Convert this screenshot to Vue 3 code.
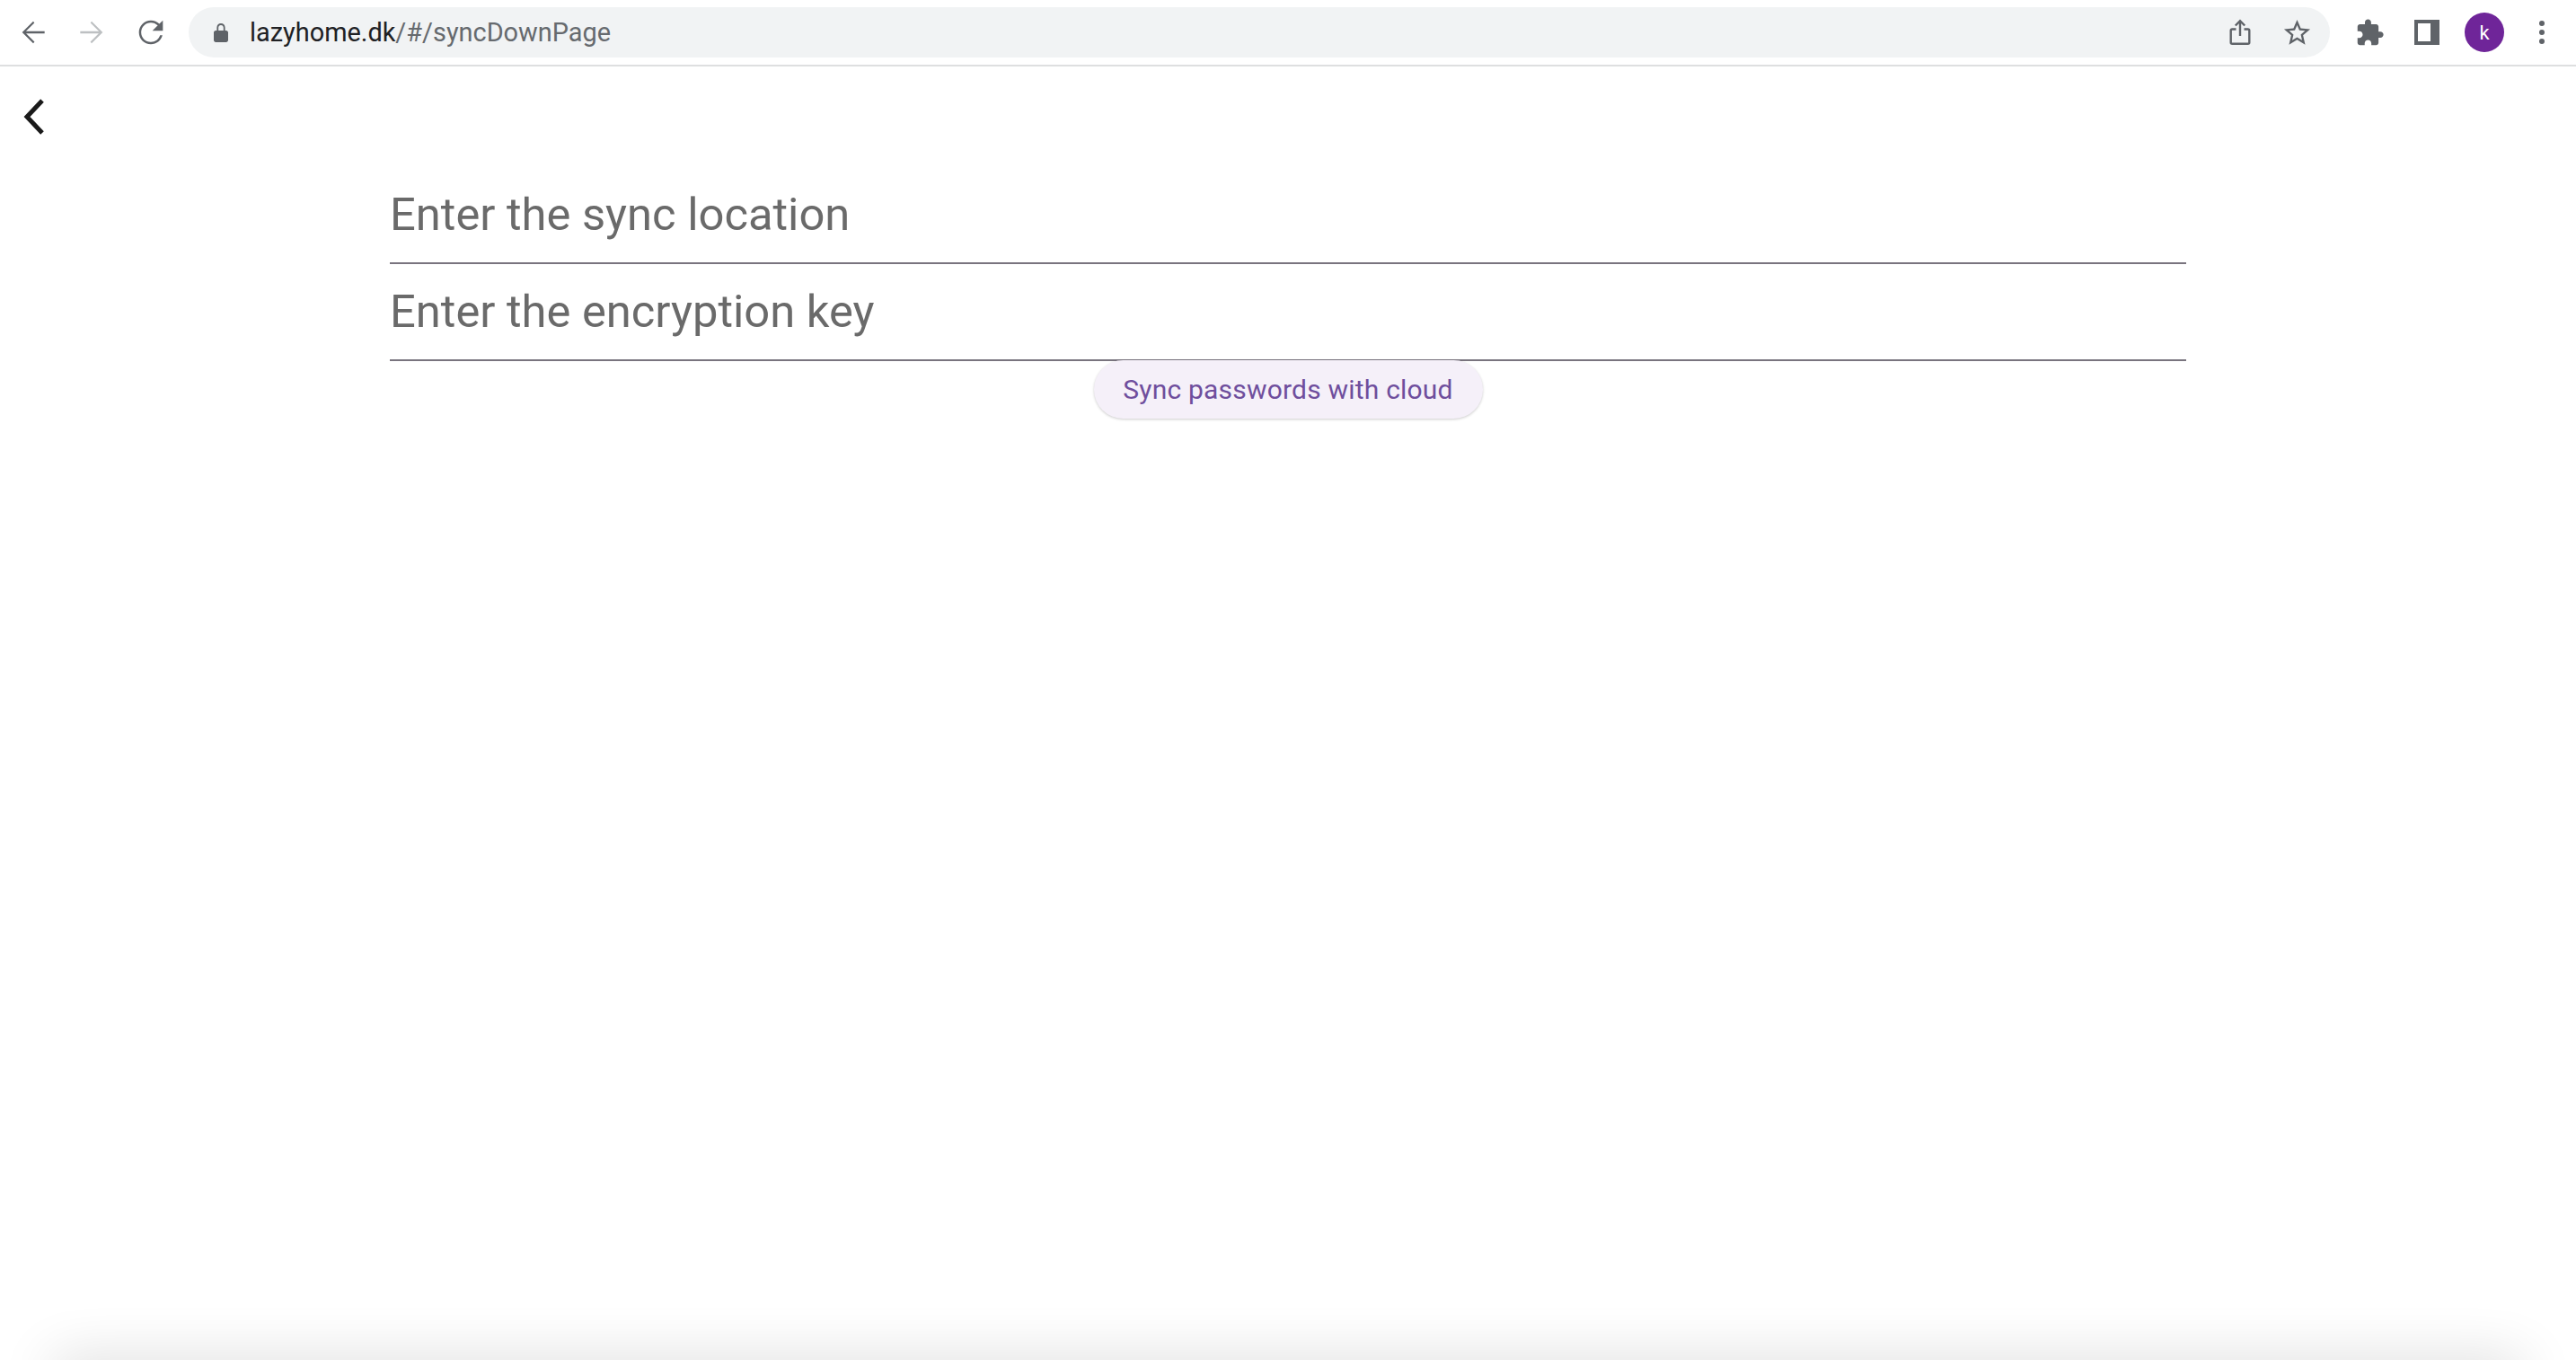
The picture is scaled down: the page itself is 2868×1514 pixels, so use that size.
<template>
  <div class="window">
    <header class="toolbar">
      <div class="nav-buttons">
        <button class="icon-btn" type="button" aria-label="Back">
          <svg viewBox="0 0 24 24" width="38" height="38"><path d="M20 11.200H6.900l5.900-5.900L12 4.200 4.200 12l7.800 7.800.9-1.100-5.900-5.900H20z" /></svg>
        </button>
        <button class="icon-btn disabled" type="button" aria-label="Forward">
          <svg viewBox="0 0 24 24" width="38" height="38"><path d="M4 11.200h13.100l-5.900-5.900.8-1.100 7.800 7.800-7.800 7.800-.9-1.100 5.900-5.900H4z" /></svg>
        </button>
        <button class="icon-btn" type="button" aria-label="Reload">
          <svg viewBox="0 0 24 24" width="40" height="40"><path d="M17.650 6.350C16.200 4.900 14.210 4 12 4c-4.420 0-7.990 3.580-7.990 8s3.570 8 7.990 8c3.730 0 6.840-2.550 7.730-6h-1.600c-.82 2.630-3.240 4.500-6.130 4.500-3.590 0-6.500-2.910-6.500-6.500S8.410 5.500 12 5.500c1.800 0 3.400.75 4.580 1.920L13 11h7V4l-2.350 2.350z" /></svg>
        </button>
      </div>

      <div class="omnibox">
        <svg class="lock" viewBox="0 0 16 21" width="16" height="21"><path d="M8 0C5.300 0 3.400 2 3.400 4.700V8H2.200C1 8 0 9 0 10.200v8.600C0 20 1 21 2.200 21h11.600c1.200 0 2.200-1 2.200-2.200v-8.600C16 9 15 8 13.800 8h-1.200V4.700C12.600 2 10.700 0 8 0zm0 1.900c1.700 0 2.800 1.200 2.800 2.900V8H5.200V4.800C5.200 3.100 6.300 1.900 8 1.900z" /></svg>
        <span class="url"><span class="host">lazyhome.dk</span>/#/syncDownPage</span>
        <button class="icon-btn share" type="button" aria-label="Share">
          <svg viewBox="0 0 24 30" width="24" height="30" fill="none" stroke-width="2.400">
            <path d="M12 19V2.500M6.800 7.500 12 2.200l5.200 5.300M7.500 11.500H3.200A1.500 1.500 0 0 0 1.700 13v13.300a1.500 1.500 0 0 0 1.500 1.500h17.600a1.500 1.500 0 0 0 1.500-1.500V13a1.500 1.500 0 0 0-1.500-1.500h-4.300" />
          </svg>
        </button>
        <button class="icon-btn star" type="button" aria-label="Bookmark">
          <svg viewBox="0 0 24 24" width="35" height="35"><path d="M22 9.240l-7.190-.62L12 2 9.190 8.630 2 9.240l5.460 4.730L5.820 21 12 17.270 18.180 21l-1.630-7.030L22 9.240zM12 15.400l-3.760 2.270 1-4.280-3.320-2.880 4.380-.38L12 6.100l1.710 4.040 4.380.38-3.320 2.880 1 4.280L12 15.400z" /></svg>
        </button>
      </div>

      <div class="tool-buttons">
        <button class="icon-btn puzzle" type="button" aria-label="Extensions">
          <svg viewBox="0 0 24 24" width="33" height="33"><path d="M20.500 11H19V7c0-1.100-.9-2-2-2h-4V3.500C13 2.120 11.880 1 10.500 1S8 2.120 8 3.500V5H4c-1.100 0-1.990.9-1.990 2v3.800H3.500c1.490 0 2.700 1.210 2.700 2.700s-1.210 2.700-2.700 2.700H2V20c0 1.100.9 2 2 2h3.800v-1.500c0-1.490 1.210-2.700 2.700-2.700 1.490 0 2.700 1.210 2.700 2.700V22H17c1.100 0 2-.9 2-2v-4h1.500c1.380 0 2.500-1.120 2.500-2.500S21.880 11 20.500 11z" /></svg>
        </button>
        <button class="icon-btn panel" type="button" aria-label="Side panel">
          <svg viewBox="0 0 28 28" width="28" height="28"><path fill-rule="evenodd" d="M0 0h28v28H0zM4 4v20h14V4z" /></svg>
        </button>
        <span class="avatar">k</span>
        <button class="icon-btn menu" type="button" aria-label="Menu">
          <svg viewBox="0 0 6 26" width="6" height="26"><circle cx="3" cy="3" r="3" /><circle cx="3" cy="13" r="3" /><circle cx="3" cy="23" r="3" /></svg>
        </button>
      </div>
    </header>

    <main class="page">
      <button class="page-back" type="button" aria-label="Go back">
        <svg viewBox="0 0 24 40" width="24" height="40" fill="none"><path d="M21 2 4 20l17 18" /></svg>
      </button>

      <form class="sync-form" @submit.prevent>
        <input v-model="location" class="field" type="text" placeholder="Enter the sync location" />
        <input v-model="encryptionKey" class="field" type="text" placeholder="Enter the encryption key" />
        <button class="sync-button" type="submit">Sync passwords with cloud</button>
      </form>
    </main>

    <div class="bottom-shadow"></div>
  </div>
</template>

<script setup>
import { ref } from 'vue'

const location = ref('')
const encryptionKey = ref('')
</script>

<style>
html,
body {
  margin: 0;
  overflow: hidden;
  background: #fff;
}
</style>

<style scoped>
.window {
  position: relative;
  height: 100vh;
  overflow: hidden;
  display: flex;
  flex-direction: column;
  font-family: Roboto, "Liberation Sans", sans-serif;
}

.toolbar {
  flex: 0 0 auto;
  height: 72px;
  border-bottom: 2px solid #dedfe0;
  display: flex;
  align-items: center;
}

.icon-btn {
  padding: 0;
  border: 0;
  background: none;
  display: inline-flex;
  align-items: center;
  justify-content: center;
  fill: #5f6368;
  stroke: #5f6368;
  stroke-width: 0;
}

.nav-buttons {
  width: 210px;
  flex: 0 0 auto;
  display: flex;
  align-items: center;
  padding-left: 18px;
  gap: 27px;
  box-sizing: border-box;
}

.icon-btn.disabled {
  fill: #bdc0c2;
}

.omnibox {
  flex: 0 0 auto;
  width: 2384px;
  height: 56px;
  border-radius: 28px;
  background: #f1f3f4;
  display: flex;
  align-items: center;
  box-sizing: border-box;
  padding-left: 28px;
  padding-right: 19px;
}

.lock {
  fill: #5f6368;
  flex: 0 0 auto;
}

.url {
  margin-left: 24px;
  flex: 1;
  font-size: 28.900px;
  color: #666a6e;
  white-space: nowrap;
}

.host {
  color: #202124;
}

.icon-btn.share {
  fill: none;
  stroke-width: 2.400px;
  margin-right: 34px;
}

.tool-buttons {
  flex: 1;
  display: flex;
  align-items: center;
  padding-left: 28px;
}

.icon-btn.panel {
  margin-left: 33px;
}

.avatar {
  margin-left: 28px;
  width: 44px;
  height: 44px;
  border-radius: 50%;
  background: #6f2599;
  color: #fff;
  font-size: 22px;
  display: flex;
  align-items: center;
  justify-content: center;
}

.icon-btn.menu {
  margin-left: 39px;
}

.page {
  flex: 1;
  display: flex;
  flex-direction: column;
}

.page-back {
  align-self: flex-start;
  margin: 36px 0 0 26px;
  padding: 0;
  border: 0;
  background: none;
  display: flex;
}

.page-back path {
  stroke: #1a1a1a;
  stroke-width: 5px;
}

.sync-form {
  width: 2000px;
  margin: 36px auto 0;
  display: flex;
  flex-direction: column;
  align-items: center;
}

.field {
  width: 100%;
  height: 105px;
  box-sizing: content-box;
  padding: 0 0 1px;
  border: 0;
  border-bottom: 2px solid #79747e;
  outline: none;
  background: none;
  font-family: inherit;
  font-size: 50.700px;
  color: #1c1b1f;
}

.field::placeholder {
  color: #6a6a6a;
  opacity: 1;
}

.sync-button {
  width: 433px;
  height: 65px;
  margin-top: -1px;
  padding: 0;
  border: 0;
  border-radius: 33px;
  background: #f5f0f9;
  box-shadow: 0 1px 3px rgba(0, 0, 0, 0.2);
  color: #6f4e9d;
  font-family: inherit;
  font-size: 30px;
  letter-spacing: 0.2px;
}

.bottom-shadow {
  position: absolute;
  left: 60px;
  right: 60px;
  bottom: -40px;
  height: 40px;
  box-shadow: 0 0 62px rgba(0, 0, 0, 0.16);
}
</style>
